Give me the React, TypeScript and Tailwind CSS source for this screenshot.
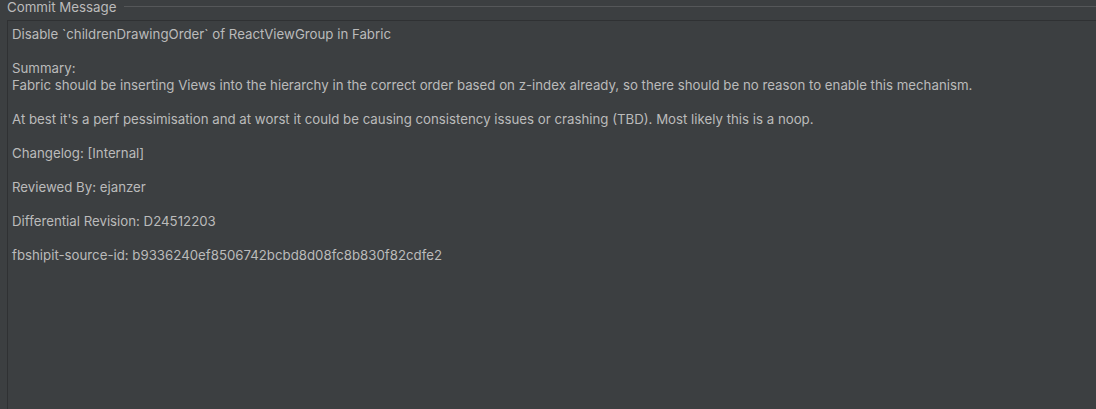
const LINES = [
  'Disable `childrenDrawingOrder` of ReactViewGroup in Fabric',
  '',
  'Summary:',
  'Fabric should be inserting Views into the hierarchy in the correct order based on z-index already, so there should be no reason to enable this mechanism.',
  '',
  "At best it's a perf pessimisation and at worst it could be causing consistency issues or crashing (TBD). Most likely this is a noop.",
  '',
  'Changelog: [Internal]',
  '',
  'Reviewed By: ejanzer',
  '',
  'Differential Revision: D24512203',
  '',
  'fbshipit-source-id: b9336240ef8506742bcbd8d08fc8b830f82cdfe2',
]

export default function App() {
  return (
    <div className="w-[1096px] h-[409px] bg-[#3c3f41] overflow-hidden flex flex-col font-['Inter',sans-serif] text-[13.25px] text-[#bbbbbb]">
      {/* title row */}
      <div className="h-[20px] flex items-start pl-[7px]">
        <span className="leading-[14px] text-[13.3px]">Commit Message</span>
        <div className="flex-1 h-px bg-[#555759] mt-[6px] ml-[8px]" />
      </div>

      {/* message box */}
      <div className="flex-1 ml-[7px] border-t border-l border-[#2f3133] pl-[4px] pt-[5px]">
        {LINES.map((l, i) => (
          <div key={i} className="h-[17px] leading-[17px] whitespace-pre">{l}</div>
        ))}
      </div>
    </div>
  )
}
